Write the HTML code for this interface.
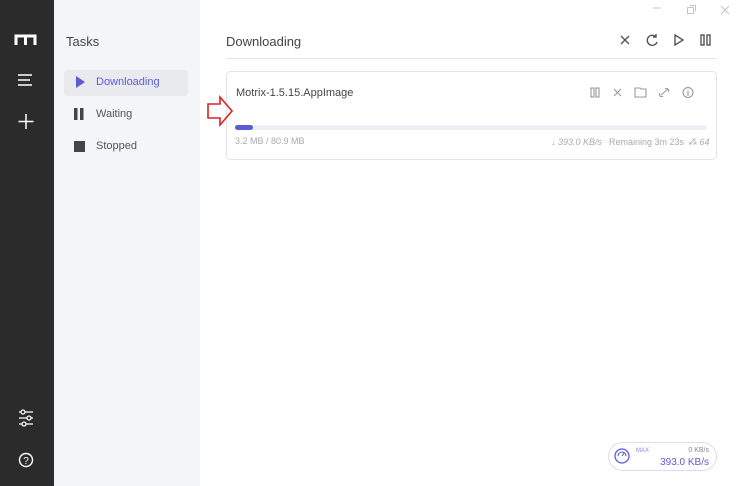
<!DOCTYPE html>
<html><head><style>
*{margin:0;padding:0;box-sizing:border-box}
body{width:741px;height:486px;position:relative;font-family:"Liberation Sans",sans-serif;background:#fff;overflow:hidden}
.side{position:absolute;left:0;top:0;width:54px;height:486px;background:#2b2b2b}
.sub{position:absolute;left:54px;top:0;width:146px;height:486px;background:#f4f5f7}
.t{position:absolute;white-space:nowrap}
</style></head><body>
<div class="side">
<svg width="54" height="486" style="position:absolute;left:0;top:0">
<path d="M16 45V36H35V45M25.5 36V45" stroke="#fff" stroke-width="3" fill="none"/>
<path d="M18 75H32M18 80H30M18 85H32" stroke="#fff" stroke-width="1.5"/>
<path d="M26 114V129M18.5 121.5H33.5" stroke="#fff" stroke-width="1.5"/>
<path d="M19 412H33M19 418H33M19 424H33" stroke="#fff" stroke-width="1.3"/>
<circle cx="23" cy="412" r="2" fill="#2b2b2b" stroke="#fff" stroke-width="1.3"/>
<circle cx="29" cy="418" r="2" fill="#2b2b2b" stroke="#fff" stroke-width="1.3"/>
<circle cx="24" cy="424" r="2" fill="#2b2b2b" stroke="#fff" stroke-width="1.3"/>
<circle cx="26" cy="460" r="6.5" stroke="#fff" stroke-width="1.4" fill="none"/>
<text x="26" y="464" fill="#fff" font-size="10" text-anchor="middle" font-family="Liberation Sans">?</text>
</svg></div>
<div class="sub">
<div class="t" style="left:12px;top:34px;font-size:13px;color:#444">Tasks</div>
<div style="position:absolute;left:10px;top:70px;width:124px;height:26px;background:#e9eaee;border-radius:3px"></div>
<svg width="146" height="160" style="position:absolute;left:0;top:0">
<path d="M22 76L31 82L22 88Z" fill="#5b5bd6"/>
<rect x="20" y="108" width="3.5" height="12" fill="#444"/><rect x="26" y="108" width="3.5" height="12" fill="#444"/>
<rect x="20" y="141" width="11" height="11" fill="#444"/>
</svg>
<div class="t" style="left:42px;top:76px;font-size:11px;color:#5b5bd6">Downloading</div>
<div class="t" style="left:42px;top:108px;font-size:11px;color:#555">Waiting</div>
<div class="t" style="left:42px;top:140px;font-size:11px;color:#555">Stopped</div>
</div>
<div class="t" style="left:226px;top:34px;font-size:13px;color:#444">Downloading</div>
<div style="position:absolute;left:226px;top:58px;width:491px;height:1px;background:#e5e5e5"></div>
<svg width="741" height="486" style="position:absolute;left:0;top:0">
<g stroke="#c4c4c4" stroke-width="1" fill="none"><path d="M653 8H661M721 6L729 14M729 6L721 14"/><rect x="687.5" y="7.5" width="6" height="6"/><path d="M689.5 5.5H695.5V11.5"/></g>
<g stroke="#555" stroke-width="1.4" fill="none">
<path d="M621 36L629 44M629 36L621 44"/>
<path d="M656 37A5 5 0 1 0 657 42M656 34V37H653"/>
<path d="M675 35L683 40L675 45Z"/>
<rect x="701" y="35" width="3" height="10"/><rect x="707" y="35" width="3" height="10"/>
</g>
<rect x="226.5" y="71.5" width="490" height="88" rx="4" fill="#fff" stroke="#e3e3e3"/>
<g stroke="#999" stroke-width="1.1" fill="none">
<rect x="591" y="88" width="3" height="9"/><rect x="596" y="88" width="3" height="9"/>
<path d="M614 89L621 96M621 89L614 96"/>
<path d="M635 88H640L641 89H646V97H635Z"/>
<path d="M661 95L668 89M660 93a2 2 0 0 0 3 3M665 89a2 2 0 0 1 3 3"/>
<circle cx="688" cy="92.5" r="5"/><path d="M688 91V96M688 89V90"/>
</g>
<rect x="235" y="125" width="472" height="5" rx="2.5" fill="#eef0f5"/>
<rect x="235" y="125" width="18" height="5" rx="2.5" fill="#5b5bd6"/>
<path d="M208 104H220V97L232 111L220 125V118H208Z" fill="none" stroke="#e02020" stroke-width="1.6"/>
<rect x="608.5" y="442.5" width="108" height="28" rx="14" fill="#fff" stroke="#dcdcf0"/>
<circle cx="622" cy="456" r="7" fill="none" stroke="#5b5bd6" stroke-width="1.3"/>
<path d="M618 456A4 4 0 0 1 626 456M622 456L624 453" fill="none" stroke="#5b5bd6" stroke-width="1.1"/>
</svg>
<div class="t" style="left:236px;top:87px;font-size:11px;color:#444">Motrix-1.5.15.AppImage</div>
<div class="t" style="left:235px;top:136px;font-size:9px;color:#aaa">3.2 MB / 80.9 MB</div>
<div class="t" style="left:551px;top:137px;font-size:9px;color:#aaa;font-style:italic">↓ 393.0 KB/s</div>
<div class="t" style="left:609px;top:137px;font-size:9px;color:#aaa">Remaining 3m 23s</div>
<div class="t" style="left:688px;top:137px;font-size:9px;color:#aaa;font-style:italic">⁂ 64</div>
<div class="t" style="left:636px;top:448px;font-size:6px;color:#8a8ad8">MAX</div>
<div class="t" style="right:32px;top:447px;font-size:7px;color:#888">0 KB/s</div>
<div class="t" style="right:32px;top:457px;font-size:10px;color:#5b5bd6">393.0 KB/s</div>
</body></html>
